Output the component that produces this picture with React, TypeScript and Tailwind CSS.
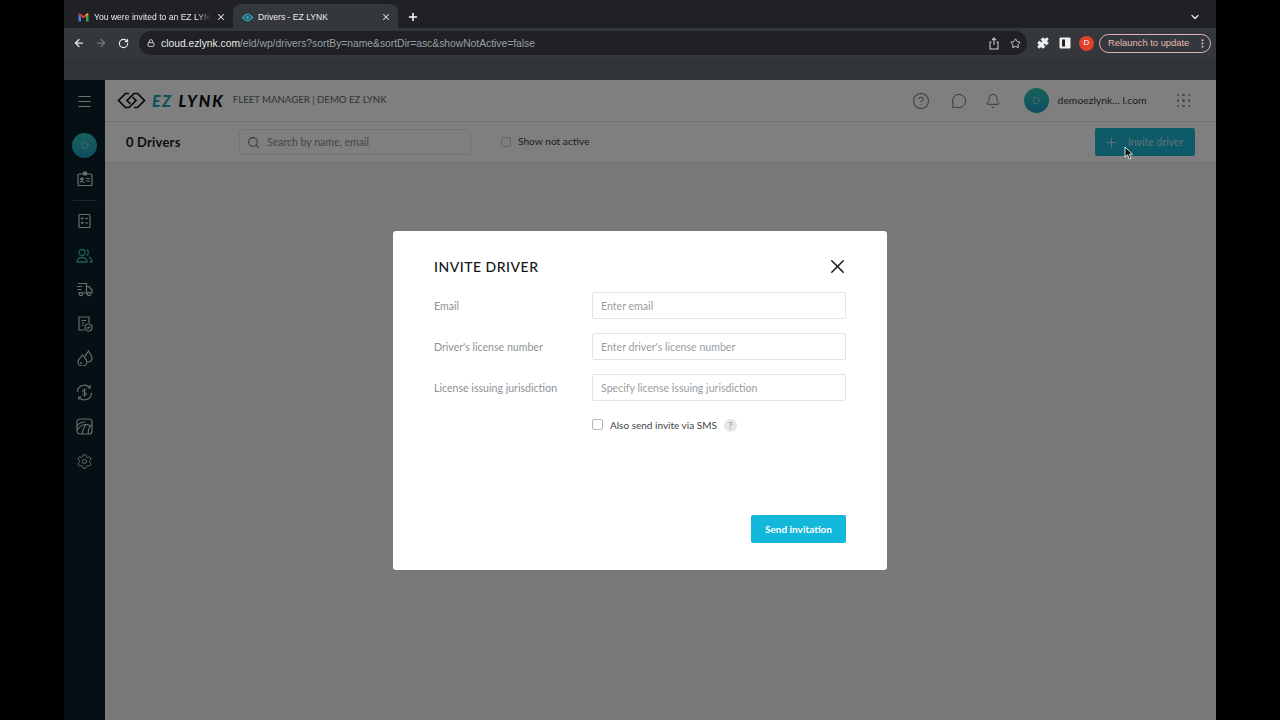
import React from "react";
import {
  ArrowLeft,
  ArrowRight,
  RotateCw,
  Lock,
  Star,
  Puzzle,
  X,
  Plus,
  ChevronDown,
  EllipsisVertical,
  Menu,
  Search,
  Bell,
  CircleHelp,
  MessageCircle,
  Settings,
} from "lucide-react";

const font = "font-['Lato','Noto_Sans',sans-serif]";

const GmailIcon = () => (
  <svg width="11" height="9" viewBox="0 0 22 18" className="shrink-0">
    <path d="M1 17V3l5 4v10z" fill="#4a7fe0" />
    <path d="M21 17V3l-5 4v10z" fill="#3fa35a" />
    <path d="M1 3c0-2 2-3 4-1.500L11 6l6-4.500c2-1.500 4-.5 4 1.500l-5 4-5 4-5-4z" fill="#d8402f" />
    <path d="M16 7l5-4c0-2-2-3-4-1.500L16 2z" fill="#eeb625" />
  </svg>
);

const EyeFavicon = () => (
  <svg width="11" height="9" viewBox="0 0 24 20" fill="none" stroke="#2aa7c0" strokeWidth="3" className="shrink-0">
    <path d="M1 10l8-7h6l8 7-8 7H9z" />
    <path d="M9 10l3-3 3 3-3 3z" />
  </svg>
);

const PanelIcon = () => (
  <svg width="12" height="12" viewBox="0 0 12 12" className="shrink-0">
    <rect width="11" height="11" x="0.500" y="0.500" rx="1" fill="#f1f1f1" />
    <rect x="3" y="2.500" width="3" height="7" fill="#222" />
  </svg>
);

const ShareIcon = () => (
  <svg width="12" height="13" viewBox="0 0 12 13" fill="none" stroke="#c8cacc" strokeWidth="1.100">
    <path d="M3.500 5H2v7h8V5H8.500M6 8V1M4 3l2-2 2 2" />
  </svg>
);

const LogoMark = () => (
  <svg width="29" height="19" viewBox="0 0 29 19" fill="none" stroke="#0c0e10" strokeWidth="1.700" className="shrink-0">
    <path d="M12 2.500H8.500L1.500 9.500l7 7H12l4-4" />
    <path d="M17 16.500h3.500l7-7-7-7H17l-4 4" />
    <path d="M15.500 6l3.500 3.500-3.500 3.500M13.500 13L10 9.500 13.500 6" />
  </svg>
);

const IdCardIcon = () => (
  <svg width="16" height="16" viewBox="0 0 16 16" fill="none" stroke="#d5d9da" strokeWidth="1.200">
    <rect x="1" y="3" width="14" height="11.500" rx="1" />
    <rect x="6.500" y="1" width="3" height="3" rx="0.500" fill="#d5d9da" />
    <circle cx="5" cy="8" r="1.200" fill="#d5d9da" />
    <path d="M3 12c0-2 4-2 4 0M9 7.500h4M9 10h4" />
  </svg>
);

const ChecklistIcon = () => (
  <svg width="15" height="16" viewBox="0 0 15 16" fill="none" stroke="#d5d9da" strokeWidth="1.200">
    <rect x="2" y="1.500" width="11" height="13" rx="1" />
    <path d="M4 5l1 1 1.500-1.500M8 5.500h3M4 9.500l1 1 1.500-1.500M8 10h3" />
  </svg>
);

const PeopleIcon = () => (
  <svg width="17" height="15" viewBox="0 0 17 15" fill="none" stroke="#3cbfa2" strokeWidth="1.300">
    <circle cx="6" cy="4.500" r="3" />
    <path d="M1 14c0-6 10-6 10 0zM10.500 1.700a3 3 0 0 1 0 5.600M13 9.200c1.800.7 3 2.200 3 4.800h-2.500" />
  </svg>
);

const TruckIcon = () => (
  <svg width="17" height="15" viewBox="0 0 17 15" fill="none" stroke="#d5d9da" strokeWidth="1.200">
    <path d="M2 1.500h8.500V11H7M1 4.500h5M1.500 7.500h4M3 10v1h.5M10.500 4.500H13l3 3.500v3h-1.500M10.500 11h1" />
    <circle cx="5" cy="12" r="1.600" />
    <circle cx="13" cy="12" r="1.600" />
  </svg>
);

const DocCheckIcon = () => (
  <svg width="16" height="16" viewBox="0 0 16 16" fill="none" stroke="#d5d9da" strokeWidth="1.200">
    <path d="M7 14H2V1h10v6" />
    <path d="M4.500 4.500h5M4.500 7h3M4.500 9.500h2" />
    <circle cx="11.500" cy="11.500" r="3.500" />
    <path d="M10 11.500l1 1 2-2" />
  </svg>
);

const DropsIcon = () => (
  <svg width="16" height="16" viewBox="0 0 16 16" fill="none" stroke="#d5d9da" strokeWidth="1.200">
    <path d="M5.500 5C3.500 8 1 9.500 1 12a4.500 4 0 0 0 9 0C10 9.500 7.500 8 5.500 5z" />
    <path d="M8 6.500C8.700 4.500 10.500 3 11.500 1c1 2.500 3.500 4.500 3.500 7 0 2.500-2 4-4.500 4" />
    <path d="M3.500 12c0 1 .7 1.700 1.500 2" />
  </svg>
);

const DollarCycleIcon = () => (
  <svg width="17" height="17" viewBox="0 0 17 17" fill="none" stroke="#d5d9da" strokeWidth="1.200">
    <path d="M1.500 8a7 7 0 0 1 12.500-4.200M15.500 9a7 7 0 0 1-12.500 4.200" />
    <path d="M14.300 1.300v2.700h-2.700M2.700 15.700V13h2.700" />
    <path d="M10.400 6.600c-.4-1.300-3.800-1.400-3.800.4 0 1.800 3.900 1.100 3.900 3 0 1.700-3.700 1.500-4.100.2M8.500 4.500v8" strokeWidth="1" />
  </svg>
);

const RoadIcon = () => (
  <svg width="17" height="17" viewBox="0 0 17 17" fill="none" stroke="#d5d9da" strokeWidth="1.200">
    <rect x="1" y="1" width="15" height="15" rx="3" />
    <path d="M1 8c2-3 5-4 8-4M1 12c3-4 6-5.500 9-5.500 2 0 4 .5 6 2M6 16c.5-4 2-7 4-9.500M12 16c0-3 .5-5 2-8" />
  </svg>
);

const CursorIcon = () => (
  <svg width="10" height="14" viewBox="0 0 10 14" className="absolute left-[1124px] top-[146px]">
    <path d="M1 1v10l2.500-2.200L5.200 13l1.800-.8-1.700-4H8.500z" fill="#111" stroke="#fff" strokeWidth="0.800" />
  </svg>
);

const sideIcons = [
  <ChecklistIcon key="a" />,
  <PeopleIcon key="b" />,
  <TruckIcon key="c" />,
  <DocCheckIcon key="d" />,
  <DropsIcon key="e" />,
  <DollarCycleIcon key="f" />,
  <RoadIcon key="g" />,
  <Settings key="h" size={17} strokeWidth={1.400} color="#d5d9da" />,
];

const fields = [
  { label: "Email", placeholder: "Enter email" },
  { label: "Driver's license number", placeholder: "Enter driver's license number" },
  { label: "License issuing jurisdiction", placeholder: "Specify license issuing jurisdiction" },
];

const BrowserChrome = () => (
  <div className="shrink-0 font-['Liberation_Sans',sans-serif] text-[#e8eaed]">
    <div className="h-7 bg-[#1f2124] flex items-end pl-2">
      <div className="w-[161px] h-[24px] flex items-center pl-[6px] pr-[7px] gap-[5px] pt-[2px]">
        <GmailIcon />
        <span className="text-[8.600px] leading-none whitespace-nowrap flex-1 [mask-image:linear-gradient(to_right,black_88%,transparent)]">
          You were invited to an EZ LYN
        </span>
        <X size={10} strokeWidth={2.500} className="shrink-0" />
      </div>
      <div className="w-[165px] h-[24px] bg-[#34373b] rounded-t-lg flex items-center pl-[9px] pr-[7px] gap-[5px] pt-[2px]">
        <EyeFavicon />
        <span className="text-[8.600px] leading-none flex-1 whitespace-nowrap">Drivers - EZ LYNK</span>
        <X size={10} strokeWidth={2.500} className="shrink-0" />
      </div>
      <div className="h-[24px] pl-[9px] pt-[2px] flex items-center flex-1">
        <Plus size={12} strokeWidth={3} color="#fff" />
        <ChevronDown size={12} strokeWidth={2.500} className="ml-auto mr-[15px]" />
      </div>
    </div>
    <div className="h-[30px] bg-[#34373b] flex items-center pl-[9px]">
      <ArrowLeft size={12} strokeWidth={2.500} color="#e6e8ea" className="shrink-0" />
      <ArrowRight size={12} strokeWidth={2.500} color="#74777b" className="ml-[10px] shrink-0" />
      <RotateCw size={11} strokeWidth={2.500} color="#e6e8ea" className="ml-[11px] shrink-0" />
      <div className="ml-[10px] w-[888px] h-[24px] shrink-0 rounded-full bg-[#1f2124] flex items-center pl-[8px] pr-[6px]">
        <Lock size={8} strokeWidth={3} color="#c4c7ca" className="shrink-0" />
        <span className="ml-[6px] mt-[1px] text-[10.300px] whitespace-nowrap">
          cloud.ezlynk.com<span className="text-[#9aa0a6]">/eld/wp/drivers?sortBy=name&amp;sortDir=asc&amp;showNotActive=false</span>
        </span>
        <div className="ml-auto flex items-center gap-[10px]">
          <ShareIcon />
          <Star size={11} strokeWidth={2} color="#d6d8da" />
        </div>
      </div>
      <Puzzle size={12} fill="#f1f1f1" color="#f1f1f1" className="ml-[10px] shrink-0" />
      <div className="ml-[10px] shrink-0"><PanelIcon /></div>
      <div className="ml-[8px] w-[15px] h-[15px] shrink-0 rounded-full bg-[#e1402a] flex items-center justify-center text-[8px] text-white">D</div>
      <div className="ml-[5px] w-[112px] h-[19px] shrink-0 rounded-full border border-[#e0b4b0] flex items-center pl-[8px] pr-[2px] text-[9.400px] text-[#e9b9b4] whitespace-nowrap">
        <span className="mt-px">Relaunch to update</span>
        <EllipsisVertical size={11} strokeWidth={2.500} className="ml-auto" />
      </div>
    </div>
    <div className="h-[22px] bg-[#303337]" />
  </div>
);

const Sidebar = () => (
  <div className="w-[41px] shrink-0 bg-[#0b2028] flex flex-col items-center">
    <div className="h-[42px] flex items-center justify-center">
      <Menu size={17} strokeWidth={1.600} color="#e3e6e7" />
    </div>
    <div className="w-[25px] h-[25px] mt-[11px] rounded-full bg-gradient-to-b from-[#2fc4b8] to-[#1e9cc0] flex items-center justify-center text-[10px] text-[#8ad6dc]">D</div>
    <div className="mt-[13px] h-4 flex items-center"><IdCardIcon /></div>
    <div className="w-6 h-px bg-[#3a4a50] mt-[13px]" />
    <div className="mt-[3px] flex flex-col items-center">
      {sideIcons.map((icon) => (
        <div key={icon.key} className="h-[34.300px] flex items-center justify-center">{icon}</div>
      ))}
    </div>
  </div>
);

const AppHeader = () => (
  <div className="h-[42px] bg-white border-b border-[#e6e6e6] flex items-center pl-3 pr-[26px] shrink-0">
    <LogoMark />
    <span className="ml-[6px] text-[16px] font-black italic text-[#1fa5bd] leading-none tracking-[1.500px]">EZ</span>
    <span className="ml-[6px] text-[16px] font-black italic text-[#0c0e10] leading-none tracking-[2px]">LYNK</span>
    <span className="ml-[8px] text-[9.600px] font-medium text-[#6b7276] whitespace-nowrap">FLEET MANAGER | DEMO EZ LYNK</span>
    <CircleHelp size={18} strokeWidth={1.400} color="#737a7d" className="ml-[525px] shrink-0" />
    <MessageCircle size={16} strokeWidth={1.500} color="#737a7d" className="ml-[21px] shrink-0" />
    <Bell size={16} strokeWidth={1.500} color="#737a7d" className="ml-[18px] shrink-0" />
    <div className="ml-[23px] w-[25px] h-[25px] shrink-0 rounded-full bg-gradient-to-b from-[#2fc4b8] to-[#1e9cc0] flex items-center justify-center text-[10px] text-[#8ad6dc]">D</div>
    <span className="ml-[9px] text-[10.400px] text-[#3a4044] whitespace-nowrap">demoezlynk... l.com</span>
    <div className="ml-auto grid grid-cols-3 gap-[3px]">
      {[0, 1, 2, 3, 4, 5, 6, 7, 8].map((i) => (
        <span key={i} className="w-[2.500px] h-[2.500px] rounded-full bg-[#8c9194]" />
      ))}
    </div>
  </div>
);

const AppToolbar = () => (
  <div className="h-[41px] bg-white border-b border-[#e6e6e6] flex items-center pl-[21px] pr-[21px] shrink-0">
    <span className="w-[113px] pt-px text-[13px] font-bold text-[#1a1d1f] tracking-[0.200px]">0 Drivers</span>
    <div className="w-[232px] h-[26px] border border-[#e4e4e4] rounded-sm flex items-center pl-[7px]">
      <Search size={13} strokeWidth={2} color="#6b7276" />
      <span className="ml-[7px] mt-[2px] text-[10.500px] text-[#8a8f92]">Search by name, email</span>
    </div>
    <div className="ml-[30px] w-[10px] h-[10px] border border-[#c8c8c8] rounded-[2px]" />
    <span className="ml-[7px] text-[10.200px] text-[#3a4044]">Show not active</span>
    <button className="ml-auto w-[100px] h-7 bg-[#1fb4d2] rounded-[2px] flex items-center pl-[9px] text-[10.500px] text-[#b9e6ef]">
      <Plus size={15} strokeWidth={1.300} color="#d5f0f5" />
      <span className="ml-[9px] mt-[2px]">Invite driver</span>
    </button>
  </div>
);

const InviteModal = () => (
  <div className="w-[494px] h-[339px] bg-white rounded-[3px] flex flex-col pt-[25px] pl-[41px] pr-[41px] pb-[27px] relative top-[0.500px]">
    <div className="flex items-center justify-between h-5">
      <h2 className="text-[14px] font-medium text-[#14181a] tracking-[0.500px]">INVITE DRIVER</h2>
      <X size={23} strokeWidth={1.500} color="#14181a" className="-mr-[3px] shrink-0" />
    </div>
    <div className="mt-[16px] flex flex-col gap-[14px]">
      {fields.map((f) => (
        <div key={f.label} className="flex items-center">
          <label className="w-[158px] pt-[2px] text-[10.600px] text-[#8d9295]">{f.label}</label>
          <input
            placeholder={f.placeholder}
            className="w-[254px] h-[27px] border border-[#e3e3e3] rounded-[2px] px-[8px] text-[10.600px] placeholder:text-[#999da0] outline-none"
          />
        </div>
      ))}
    </div>
    <div className="mt-[15px] ml-[158px] flex items-center">
      <div className="w-[11px] h-[11px] border border-[#b9b9b9] rounded-[2px]" />
      <span className="ml-[7px] pt-[2px] text-[10px] text-[#3f4447]">Also send invite via SMS</span>
      <span className="ml-[7px] mt-[2px] w-[13px] h-[13px] rounded-full bg-[#e6e6e6] flex items-center justify-center text-[9px] text-[#8d9295]">?</span>
    </div>
    <button className="mt-auto self-end w-[95px] h-7 bg-[#12b7da] rounded-[2px] text-[10px] font-bold text-white">
      Send invitation
    </button>
  </div>
);

export default function App() {
  return (
    <div className={`relative h-[720px] w-[1280px] overflow-hidden bg-black px-16 ${font}`}>
      <div className="h-full flex flex-col">
        <BrowserChrome />
        <div className="relative flex-1 flex min-h-0">
          <Sidebar />
          <div className="flex-1 flex flex-col bg-[#f0f0f0]">
            <AppHeader />
            <AppToolbar />
          </div>
          <div className="absolute inset-0 bg-black/50 flex items-center justify-center">
            <InviteModal />
          </div>
        </div>
      </div>
      <CursorIcon />
    </div>
  );
}
